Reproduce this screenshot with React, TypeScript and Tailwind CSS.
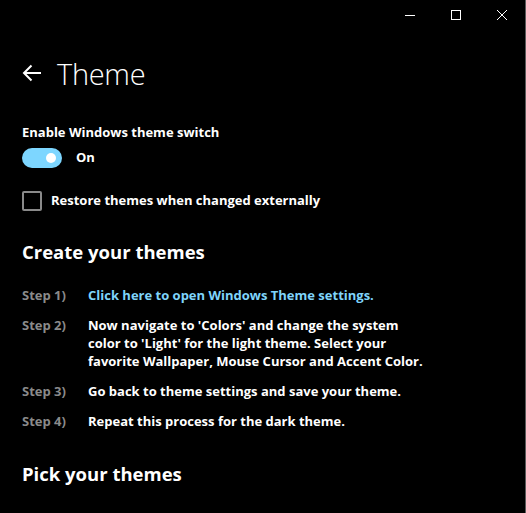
import React from 'react';

const steps = [
    { label: 'Step 1)', lines: ['Click here to open Windows Theme settings.'], link: true },
    {
        label: 'Step 2)',
        lines: [
            "Now navigate to 'Colors' and change the system",
            "color to 'Light' for the light theme. Select your",
            'favorite Wallpaper, Mouse Cursor and Accent Color.',
        ],
        link: false,
    },
    { label: 'Step 3)', lines: ['Go back to theme settings and save your theme.'], link: false },
    { label: 'Step 4)', lines: ['Repeat this process for the dark theme.'], link: false },
];

const TitleBar: React.FC = () => (
    <div className="flex justify-end h-[30px]">
        <button className="w-[46px] h-[30px] flex items-center justify-center">
            <svg width="10" height="10" viewBox="0 0 10 10"><path d="M0 5.5h10" stroke="white" strokeWidth="1" /></svg>
        </button>
        <button className="w-[46px] h-[30px] flex items-center justify-center">
            <svg width="10" height="10" viewBox="0 0 10 10"><rect x="0.5" y="0.5" width="9" height="9" fill="none" stroke="white" strokeWidth="1" /></svg>
        </button>
        <button className="w-[46px] h-[30px] flex items-center justify-center">
            <svg width="10" height="10" viewBox="0 0 10 10"><path d="M0 0l10 10M10 0L0 10" stroke="white" strokeWidth="1" /></svg>
        </button>
    </div>
);

const App: React.FC = () => {
    return (
        <div
            className="w-[526px] h-[513px] bg-black text-white overflow-hidden border-r border-[#5a5a5a]"
            style={{ fontFamily: '"Open Sans", "Noto Sans", sans-serif' }}
        >
            <TitleBar />

            <div className="flex items-center h-[44px] mt-[21px] pl-[22px]">
                <svg width="20" height="18" viewBox="0 0 20 18" className="mr-[15px]">
                    <path d="M19 9H2M9.5 1.5L2 9l7.5 7.5" fill="none" stroke="white" strokeWidth="2" />
                </svg>
                <h1 className="text-[29px] font-light leading-none tracking-[-0.3px]">Theme</h1>
            </div>

            <div className="pl-[22px] mt-[28px]">
                <p className="text-[13px] font-bold leading-[18px]">Enable Windows theme switch</p>

                <div className="flex items-center mt-[7px] h-[20px]">
                    <div className="w-[40px] h-[20px] rounded-full bg-[#7dd6ff] flex items-center justify-end pr-[6px]">
                        <div className="w-[10px] h-[10px] rounded-full bg-white" />
                    </div>
                    <span className="ml-[14px] text-[13px] font-bold">On</span>
                </div>

                <label className="flex items-center mt-[23px] h-[20px]">
                    <span className="w-[20px] h-[20px] border-2 border-[#8a8a8a] rounded-[2px]" />
                    <span className="ml-[9px] text-[13px] font-bold">Restore themes when changed externally</span>
                </label>

                <h2 className="text-[18.5px] font-bold mt-[29px] leading-[24px]">Create your themes</h2>

                <div className="mt-[22px] flex flex-col gap-[12px]">
                    {steps.map(s => (
                        <div key={s.label} className="flex text-[13px] font-bold leading-[18px]">
                            <span className="w-[66px] shrink-0 text-[#8a8a8a]">{s.label}</span>
                            <div className={`whitespace-nowrap ${s.link ? 'text-[#7fd4fa]' : 'text-white'}`}>
                                {s.lines.map(l => (
                                    <div key={l}>{l}</div>
                                ))}
                            </div>
                        </div>
                    ))}
                </div>

                <h2 className="text-[18.5px] font-bold mt-[32px] leading-[24px]">Pick your themes</h2>

                <p className="ml-[53px] mt-[24px] text-[13px] font-bold">Light Theme</p>
            </div>
        </div>
    );
};

export default App;
